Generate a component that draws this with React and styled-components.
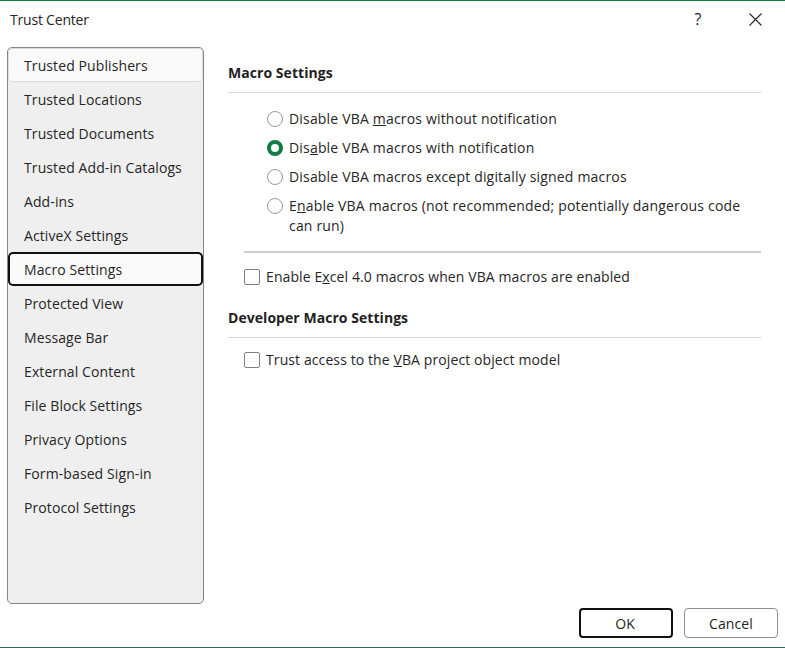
import React, { useState } from 'react';
import styled, { createGlobalStyle } from 'styled-components';

const GlobalStyle = createGlobalStyle`
  html, body {
    margin: 0;
    padding: 0;
    background: #ffffff;
  }
  body {
    font-family: 'Open Sans', 'Noto Sans', 'Liberation Sans', sans-serif;
    font-size: 14px;
    letter-spacing: 0.1px;
    color: #262626;
  }
`;

const Dialog = styled.div`
  width: 785px;
  height: 648px;
  box-sizing: border-box;
  border-top: 1px solid #107c41;
  border-bottom: 1px solid #2a6b4c;
  display: flex;
  flex-direction: column;
  overflow: hidden;
`;

const TitleBar = styled.div`
  height: 38px;
  flex: none;
  display: flex;
  align-items: center;
  padding: 0 23px 0 10px;
`;

const Title = styled.div`
  flex: 1;
  letter-spacing: -0.2px;
  padding-bottom: 1px;
`;

const HelpButton = styled.div`
  width: 14px;
  text-align: center;
  font-size: 16px;
  line-height: 20px;
  margin: 0 44px 2px 0;
`;

const CloseButton = styled.svg`
  width: 13px;
  height: 13px;
  display: block;
  margin-bottom: 2px;
`;

const Body = styled.div`
  flex: 1;
  display: flex;
  min-height: 0;
  padding: 8px 24px 0 7px;
`;

const Sidebar = styled.div`
  width: 197px;
  height: 557px;
  flex: none;
  box-sizing: border-box;
  background: #efefef;
  border: 1px solid #858585;
  border-radius: 5px;
  display: flex;
  flex-direction: column;
`;

const NavItem = styled.div`
  height: 34px;
  flex: none;
  box-sizing: border-box;
  padding-left: 16px;
  display: flex;
  align-items: center;
  white-space: nowrap;
  border-radius: 5px;
  ${({ $active }) => $active && `
    background: #fafafa;
    box-shadow: inset 0 0 0 1px #dcdcdc;
  `}
  ${({ $focused }) => $focused && `
    background: #fafafa;
    box-shadow: inset 0 0 0 2px #111111;
  `}
`;

const Content = styled.div`
  flex: 1;
  padding: 0 0 0 24px;
  min-width: 0;
`;

const Section = styled.div`
  display: flex;
  flex-direction: column;
  padding-top: ${({ $top }) => $top}px;
`;

const Heading = styled.div`
  font-weight: 700;
  letter-spacing: 0.05px;
  color: #1f1f1f;
  line-height: 20px;
  padding-bottom: 9px;
  border-bottom: 1px solid #d4d4d4;
`;

const RadioList = styled.div`
  display: flex;
  flex-direction: column;
  gap: 9px;
  padding: 16px 12px 0 39px;
`;

const RadioRow = styled.label`
  display: flex;
  align-items: flex-start;
  gap: 6px;
  line-height: 20px;
  letter-spacing: 0.18px;
`;

const RadioMark = styled.span`
  width: 16px;
  height: 16px;
  flex: none;
  box-sizing: border-box;
  margin-top: 2px;
  border-radius: 50%;
  background: #ffffff;
  border: ${({ $checked }) => ($checked ? '4px solid #107c41' : '1px solid #9a9a9a')};
`;

const Rule = styled.div`
  height: 2px;
  margin: 15px 0 0 16px;
  background: #cfcfcf;
`;

const CheckRow = styled.label`
  display: flex;
  align-items: center;
  gap: 6px;
  margin-left: 16px;
  line-height: 20px;
  padding-top: ${({ $top }) => $top}px;
`;

const CheckMark = styled.span`
  width: 16px;
  height: 16px;
  flex: none;
  box-sizing: border-box;
  border: 1px solid #7f7f7f;
  border-radius: 2px;
  background: #ffffff;
`;

const Footer = styled.div`
  height: 40px;
  flex: none;
  box-sizing: border-box;
  display: flex;
  justify-content: flex-end;
  align-items: flex-start;
  gap: 11px;
  padding: 1px 7px 0 0;
`;

const DialogButton = styled.button`
  width: 94px;
  height: 30px;
  padding: 0 ${({ $primary }) => ($primary ? '2px' : '0')} 0 0;
  box-sizing: border-box;
  background: #ffffff;
  color: #262626;
  font: inherit;
  letter-spacing: inherit;
  border-radius: 4px;
  border: ${({ $primary }) => ($primary ? '2px solid #111111' : '1px solid #8f8f8f')};
`;

const navItems = [
  'Trusted Publishers',
  'Trusted Locations',
  'Trusted Documents',
  'Trusted Add-in Catalogs',
  'Add-ins',
  'ActiveX Settings',
  'Macro Settings',
  'Protected View',
  'Message Bar',
  'External Content',
  'File Block Settings',
  'Privacy Options',
  'Form-based Sign-in',
  'Protocol Settings',
];

export default function App() {
  const [current] = useState('Macro Settings');

  return (
    <>
      <GlobalStyle />
      <Dialog>
        <TitleBar>
          <Title>Trust Center</Title>
          <HelpButton>?</HelpButton>
          <CloseButton viewBox="0 0 13 13" fill="none" stroke="#262626" strokeWidth="1.1">
            <path d="M0.5 0.5 L12.5 12.5 M12.5 0.5 L0.5 12.5" />
          </CloseButton>
        </TitleBar>
        <Body>
          <Sidebar>
            {navItems.map((item, i) => (
              <NavItem key={item} $active={i === 0} $focused={item === current}>
                {item}
              </NavItem>
            ))}
          </Sidebar>
          <Content>
            <Section $top={16}>
              <Heading>Macro Settings</Heading>
              <RadioList>
                <RadioRow>
                  <RadioMark />
                  <span>Disable VBA <u>m</u>acros without notification</span>
                </RadioRow>
                <RadioRow>
                  <RadioMark $checked />
                  <span>Dis<u>a</u>ble VBA macros with notification</span>
                </RadioRow>
                <RadioRow>
                  <RadioMark />
                  <span>Disable VBA macros except di<u>g</u>itally signed macros</span>
                </RadioRow>
                <RadioRow>
                  <RadioMark />
                  <span>E<u>n</u>able VBA macros (not recommended; potentially dangerous code can run)</span>
                </RadioRow>
              </RadioList>
              <Rule />
              <CheckRow $top={14}>
                <CheckMark />
                <span>Enable E<u>x</u>cel 4.0 macros when VBA macros are enabled</span>
              </CheckRow>
            </Section>
            <Section $top={21}>
              <Heading>Developer Macro Settings</Heading>
              <CheckRow $top={12}>
                <CheckMark />
                <span>Trust access to the <u>V</u>BA project object model</span>
              </CheckRow>
            </Section>
          </Content>
        </Body>
        <Footer>
          <DialogButton $primary>OK</DialogButton>
          <DialogButton>Cancel</DialogButton>
        </Footer>
      </Dialog>
    </>
  );
}
